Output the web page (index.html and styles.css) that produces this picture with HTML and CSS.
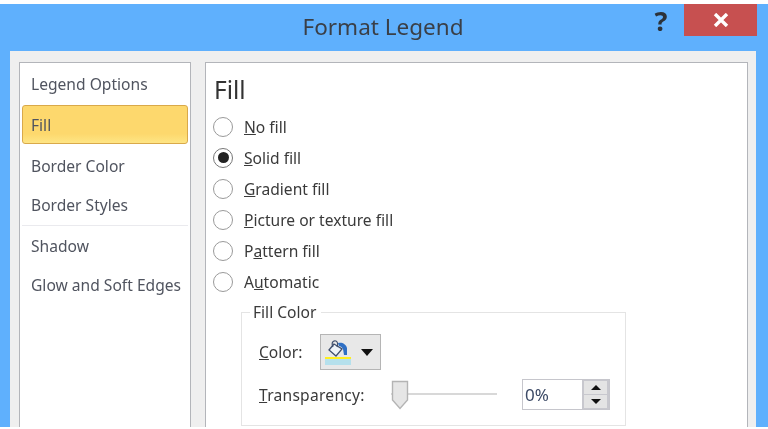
FILE: index.html
```html
<!DOCTYPE html>
<html lang="en">

<head>
    <meta charset="UTF-8">
    <meta name="viewport" content="width=device-width, initial-scale=1.0">
    <title>Format Legend</title>
    <link rel="stylesheet" href="styles.css">
</head>

<body>
    <div class="dialog">
        <div class="titlebar">
            <div class="title">Format Legend</div>
            <div class="help">?</div>
            <div class="close">
                <svg width="16" height="14" viewBox="0 0 16 14">
                    <path d="M2 1 L14 13 M14 1 L2 13" stroke="#fff" stroke-width="3.4" fill="none" />
                </svg>
            </div>
        </div>

        <div class="content">
            <div class="side-nav">
                <div class="nav-item nav-first">Legend Options</div>
                <div class="nav-item nav-active">Fill</div>
                <div class="nav-item">Border Color</div>
                <div class="nav-item nav-split">Border Styles</div>
                <div class="nav-item">Shadow</div>
                <div class="nav-item">Glow and Soft Edges</div>
            </div>

            <div class="main-panel">
                <div class="panel-title">Fill</div>

                <div class="radio-row"><span class="radio"></span><span><u>N</u>o fill</span></div>
                <div class="radio-row"><span class="radio checked"></span><span><u>S</u>olid fill</span></div>
                <div class="radio-row"><span class="radio"></span><span><u>G</u>radient fill</span></div>
                <div class="radio-row"><span class="radio"></span><span><u>P</u>icture or texture fill</span></div>
                <div class="radio-row"><span class="radio"></span><span>P<u>a</u>ttern fill</span></div>
                <div class="radio-row"><span class="radio"></span><span>A<u>u</u>tomatic</span></div>

                <fieldset class="group">
                    <legend>Fill Color</legend>

                    <div class="color-row">
                        <span class="color-label"><u>C</u>olor:</span>
                        <div class="color-btn">
                            <div class="bucket">
                                <svg width="24" height="17" viewBox="0 0 24 17">
                                    <path d="M8 4 L3 10 L10 16 L16 9 Z" fill="#eef3f9" stroke="#3f4f6e" stroke-width="1.3" />
                                    <path d="M7 7 C5 3 7 0 10 1 C12 2 12 5 11 7" fill="none" stroke="#3f4f6e" stroke-width="1.2" />
                                    <path d="M12 3 C16 2 20 4 21 8 L21 15 L18 15 L17 9 C16 7 14 6 13 6 Z" fill="#2f6fc4" />
                                </svg>
                                <div class="bucket-swatch"></div>
                            </div>
                            <div class="caret-down"></div>
                        </div>
                    </div>

                    <div class="trans-row">
                        <span class="trans-label"><u>T</u>ransparency:</span>
                        <div class="slider">
                            <svg class="thumb" width="18" height="30" viewBox="0 0 18 30">
                                <path d="M1.5 1.5 H16.5 V20 L9 28.5 L1.5 20 Z" fill="#e6e6e6" stroke="#b4b4b4" stroke-width="1.4" />
                            </svg>
                            <div class="track"></div>
                        </div>
                        <div class="spinner">
                            <div class="spin-value">0%</div>
                            <div class="spin-btns">
                                <div class="spin-btn"><span class="caret-up small"></span></div>
                                <div class="spin-btn"><span class="caret-down small"></span></div>
                            </div>
                        </div>
                    </div>
                </fieldset>
            </div>
        </div>
    </div>
</body>

</html>
```

FILE: styles.css
```css
:root {
    --frame-blue: #5fb0fd;
    --dialog-grey: #efefef;
    --panel-border: #b3b5ba;
    --text-main: #3a3a3a;
}

html,
body {
    margin: 0;
    padding: 0;
    width: 768px;
    height: 429px;
    overflow: hidden;
    background-color: #fff;
}

body {
    padding-top: 4px;
    box-sizing: border-box;
    font-family: "Noto Sans", "Open Sans", sans-serif;
    font-size: 15.6px;
    color: var(--text-main);
    filter: blur(0.45px);
}

.dialog {
    height: 423px;
    background-color: var(--frame-blue);
    display: flex;
    flex-direction: column;
}

.titlebar {
    height: 47px;
    display: flex;
    flex-shrink: 0;
    align-items: flex-start;
    padding-right: 11px;
    position: relative;
}

.title {
    position: absolute;
    left: 0;
    width: 766px;
    top: 7px;
    text-align: center;
    font-size: 22.5px;
    line-height: 32px;
    color: #3a3f47;
}

.help {
    margin-left: auto;
    margin-right: 15px;
    width: 16px;
    text-align: center;
    font-size: 27px;
    font-weight: 700;
    line-height: 32px;
    color: #2c3239;
    position: relative;
    top: 1px;
}

.close {
    width: 73px;
    height: 32px;
    background-color: #c75050;
    display: flex;
    align-items: center;
    justify-content: center;
    position: relative;
}

.content {
    flex: 1;
    min-height: 0;
    margin: 0 12px 0 10px;
    background-color: var(--dialog-grey);
    padding: 11px 8px 0 9px;
    display: flex;
    gap: 14px;
}

.side-nav {
    width: 172px;
    box-sizing: border-box;
    background-color: #fff;
    border: 1px solid var(--panel-border);
    border-bottom: 0;
    padding: 0 2px;
}

.nav-item {
    height: 39px;
    line-height: 39px;
    padding-left: 9px;
    white-space: nowrap;
    color: #50545f;
}

.nav-first {
    height: 42px;
    line-height: 42px;
}

.nav-active {
    height: 39px;
    line-height: 38px;
    box-sizing: border-box;
    border: 1px solid #d9a94a;
    border-radius: 3px;
    background: linear-gradient(#fdd86d, #fdd86d 75%, #fee585);
    margin-bottom: 3px;
    padding-left: 8px;
}

.nav-split {
    border-bottom: 1px solid #eaeaee;
    margin: 0 0 1px;
}

.main-panel {
    flex: 1;
    box-sizing: border-box;
    background-color: #fff;
    border: 1px solid var(--panel-border);
    border-bottom: 0;
    padding: 10px 0 0 8px;
}

.panel-title {
    font-size: 24.5px;
    line-height: 34px;
    color: #333;
    margin-bottom: 4px;
}

.radio-row {
    height: 31px;
    display: flex;
    align-items: center;
    gap: 10px;
}

.radio {
    width: 20px;
    height: 20px;
    margin-left: -1px;
    margin-right: 1px;
    box-sizing: border-box;
    border: 1.5px solid #9a9a9a;
    border-radius: 50%;
    background-color: #fff;
    display: flex;
    align-items: center;
    justify-content: center;
}

.radio.checked {
    border-color: #777;
}

.radio.checked::before {
    content: '';
    width: 11px;
    height: 11px;
    border-radius: 50%;
    background-color: #222;
}

.group {
    margin: 5px 0 0 27px;
    padding: 0 0 0 17px;
    width: 385px;
    height: 124px;
    box-sizing: border-box;
    border: 1px solid #e4e4e4;
}

.group legend {
    margin-left: -9px;
    padding: 0 5px 0 3px;
    line-height: 20px;
}

.color-row {
    display: flex;
    align-items: center;
    gap: 18px;
    height: 36px;
    margin-top: 12px;
}

.color-btn {
    width: 61px;
    height: 36px;
    box-sizing: border-box;
    border: 1px solid #b5b5b5;
    background-color: #e8e8e8;
    display: flex;
    align-items: center;
    gap: 10px;
    padding-left: 4px;
}

.bucket {
    width: 26px;
    display: flex;
    flex-direction: column;
    align-items: center;
}

.bucket svg {
    display: block;
}

.bucket-swatch {
    width: 26px;
    height: 8px;
    box-sizing: border-box;
    border-top: 2px solid #ffef1f;
    background-color: #b5e0ec;
}

.caret-down,
.caret-up {
    width: 0;
    height: 0;
    border-left: 6px solid transparent;
    border-right: 6px solid transparent;
}

.caret-down {
    border-top: 7px solid #111;
}

.caret-up {
    border-bottom: 7px solid #111;
}

.caret-down.small {
    border-left-width: 5px;
    border-right-width: 5px;
    border-top-width: 5px;
}

.caret-up.small {
    border-left-width: 5px;
    border-right-width: 5px;
    border-bottom-width: 5px;
}

.trans-row {
    display: flex;
    align-items: center;
    height: 31px;
    margin-top: 9px;
}

.trans-label {
    width: 132px;
    letter-spacing: 0.25px;
}

.slider {
    width: 106px;
    height: 30px;
    display: flex;
    align-items: center;
    position: relative;
}

.thumb {
    position: absolute;
    left: 0;
    top: 0;
}

.track {
    width: 100%;
    height: 2px;
    background-color: #d8d8d8;
    margin-top: -1px;
}

.spinner {
    margin-left: 25px;
    width: 88px;
    height: 31px;
    box-sizing: border-box;
    border: 1px solid #c6c6cc;
    background-color: #fff;
    display: flex;
}

.spin-value {
    flex: 1;
    padding-left: 2px;
    font-size: 17px;
    line-height: 29px;
    color: #3c4a66;
}

.spin-btns {
    width: 27px;
    background-color: #c8c8ce;
    padding: 1px 2px;
    box-sizing: border-box;
    display: flex;
    flex-direction: column;
    gap: 1px;
}

.spin-btn {
    flex: 1;
    background-color: #e4e4e4;
    display: flex;
    align-items: center;
    justify-content: center;
}
```
